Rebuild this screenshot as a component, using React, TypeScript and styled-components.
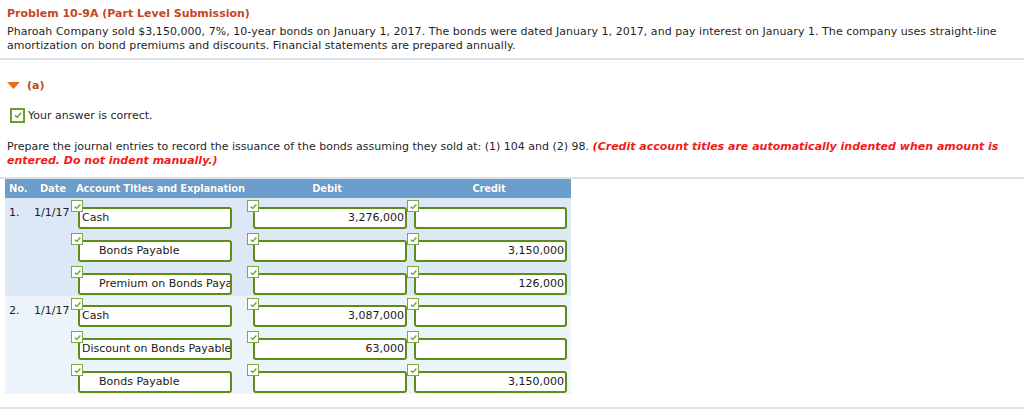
import React from "react";
import styled, { createGlobalStyle } from "styled-components";

const GlobalStyle = createGlobalStyle`
  html, body { margin: 0; padding: 0; background: #fff; }
  body {
    font-family: "DejaVu Sans", Verdana, sans-serif;
    font-size: 11px;
    color: #1f1f1f;
  }
`;

const Page = styled.div`
  width: 1024px;
  height: 409px;
  overflow: hidden;
`;

const Intro = styled.div`
  box-sizing: border-box;
  padding: 7px 7px 0;
  height: 58px;
`;

const Title = styled.div`
  color: #c7461c;
  font-weight: bold;
  font-size: 11px;
  line-height: 14px;
  margin-bottom: 4px;
`;

const Para = styled.p`
  margin: 0;
  line-height: 14px;
  letter-spacing: 0.04px;
`;

const Rule = styled.div<{ $mt?: number }>`
  height: 2px;
  background: #dde2e8;
  margin-top: ${(p) => p.$mt ?? 0}px;
`;

const PartHeading = styled.div`
  display: flex;
  align-items: center;
  gap: 7px;
  margin: 18px 0 0 7px;
  height: 14px;
  color: #c7461c;
  font-weight: bold;
`;

const Correct = styled.div`
  display: flex;
  align-items: center;
  gap: 3px;
  margin: 15px 0 0 10px;
  height: 16px;
`;

const Instructions = styled.p`
  margin: 17px 7px 0;
  line-height: 14px;
  height: 30px;
`;

const Warn = styled.span`
  color: #f31a1a;
  font-weight: bold;
  font-style: italic;
`;

const Table = styled.div`
  width: 566px;
  margin-left: 5px;
`;

const HeadRow = styled.div`
  display: grid;
  grid-template-columns: 31px 37px 174px 160px 164px;
  height: 19px;
  align-items: center;
  background: #6b9ecb;
  color: #fff;
  font-weight: bold;
  font-size: 10px;
  letter-spacing: -0.2px;
  text-shadow: 0 0 1px rgba(40, 70, 110, 0.5);
`;

const HeadCell = styled.div<{ $center?: boolean; $pl?: number }>`
  padding-left: ${(p) => p.$pl ?? 0}px;
  text-align: ${(p) => (p.$center ? "center" : "left")};
  white-space: nowrap;
`;

const Entry = styled.div<{ $bg: string }>`
  background: ${(p) => p.$bg};
  padding: 2px 0 1px;
  display: flex;
  flex-direction: column;
  gap: 4px;
`;

const Row = styled.div`
  display: grid;
  grid-template-columns: 29px 37px 176px 160px 164px;
  height: 29px;
`;

const Cell = styled.div<{ $pl?: number }>`
  padding: 6px 0 0 ${(p) => p.$pl ?? 0}px;
  line-height: 14px;
  white-space: nowrap;
`;

const Field = styled.div<{ $offset: number }>`
  position: relative;
  padding: 7px 0 0 ${(p) => p.$offset}px;
`;

const Box = styled.div<{ $w: number; $right?: boolean; $indent?: boolean }>`
  box-sizing: border-box;
  width: ${(p) => p.$w}px;
  height: 22px;
  border: 2px solid #5e8d17;
  border-radius: 3px;
  background: #fff;
  line-height: 18px;
  padding: 0 ${(p) => (p.$right ? 1 : 2)}px 0 ${(p) => (p.$indent ? 19 : 2)}px;
  text-align: ${(p) => (p.$right ? "right" : "left")};
  white-space: nowrap;
  overflow: hidden;
  color: #1a1a1a;
`;

const Badge = styled.div`
  position: absolute;
  left: 0;
  top: 0;
  width: 12px;
  height: 12px;
  box-sizing: border-box;
  border: 1px solid #7fa845;
  background: #fff;
  display: flex;
  align-items: center;
  justify-content: center;
  z-index: 1;
`;

const BigCheck = styled.div`
  width: 15px;
  height: 15px;
  box-sizing: border-box;
  border: 2px solid #6b9a2e;
  background: #fff;
  display: flex;
  align-items: center;
  justify-content: center;
`;

const Tick = ({ size }: { size: number }) => (
  <svg width={size} height={size} viewBox="0 0 10 10">
    <path d="M2 5.2 L4.2 7.2 L8.2 2.8" fill="none" stroke="#5f9c28" strokeWidth="1.4" />
  </svg>
);

const Triangle = () => (
  <svg width="13" height="7" viewBox="0 0 13 7">
    <polygon points="0,0 13,0 6.5,7" fill="#f26a1b" />
  </svg>
);

type Line = {
  no?: string;
  date?: string;
  account: string;
  indent?: boolean;
  debit?: string;
  credit?: string;
};

const entries: { bg: string; lines: Line[] }[] = [
  {
    bg: "#dce8f6",
    lines: [
      { no: "1.", date: "1/1/17", account: "Cash", debit: "3,276,000" },
      { account: "Bonds Payable", indent: true, credit: "3,150,000" },
      { account: "Premium on Bonds Payable", indent: true, credit: "126,000" },
    ],
  },
  {
    bg: "#edf3fb",
    lines: [
      { no: "2.", date: "1/1/17", account: "Cash", debit: "3,087,000" },
      { account: "Discount on Bonds Payable", debit: "63,000" },
      { account: "Bonds Payable", indent: true, credit: "3,150,000" },
    ],
  },
];

const Input = ({
  offset,
  w,
  value,
  right,
  indent,
}: {
  offset: number;
  w: number;
  value?: string;
  right?: boolean;
  indent?: boolean;
}) => (
  <Field $offset={offset}>
    <Badge>
      <Tick size={9} />
    </Badge>
    <Box $w={w} $right={right} $indent={indent}>
      {value ?? ""}
    </Box>
  </Field>
);

export default function App() {
  return (
    <Page>
      <GlobalStyle />
      <Intro>
        <Title>Problem 10-9A (Part Level Submission)</Title>
        <Para>
          Pharoah Company sold $3,150,000, 7%, 10-year bonds on January 1, 2017. The bonds were dated January 1,
          2017, and pay interest on January 1. The company uses straight-line amortization on bond premiums and
          discounts. Financial statements are prepared annually.
        </Para>
      </Intro>
      <Rule />
      <PartHeading>
        <Triangle />
        <span>(a)</span>
      </PartHeading>
      <Correct>
        <BigCheck>
          <Tick size={10} />
        </BigCheck>
        <span>Your answer is correct.</span>
      </Correct>
      <Instructions>
        Prepare the journal entries to record the issuance of the bonds assuming they sold at: (1) 104 and (2) 98.{" "}
        <Warn>(Credit account titles are automatically indented when amount is entered. Do not indent manually.)</Warn>
      </Instructions>
      <Rule $mt={7} />
      <Table>
        <HeadRow>
          <HeadCell $pl={4}>No.</HeadCell>
          <HeadCell $pl={4}>Date</HeadCell>
          <HeadCell $pl={3}>Account Titles and Explanation</HeadCell>
          <HeadCell $center>Debit</HeadCell>
          <HeadCell $center>Credit</HeadCell>
        </HeadRow>
        {entries.map((e, i) => (
          <Entry key={i} $bg={e.bg}>
            {e.lines.map((l, j) => (
              <Row key={j}>
                <Cell $pl={4}>{l.no ?? ""}</Cell>
                <Cell $pl={0}>{l.date ?? ""}</Cell>
                <Input offset={7} w={154} value={l.account} indent={l.indent} />
                <Input offset={6} w={154} value={l.debit} right />
                <Input offset={7} w={153} value={l.credit} right />
              </Row>
            ))}
          </Entry>
        ))}
      </Table>
      <Rule $mt={13} />
    </Page>
  );
}
